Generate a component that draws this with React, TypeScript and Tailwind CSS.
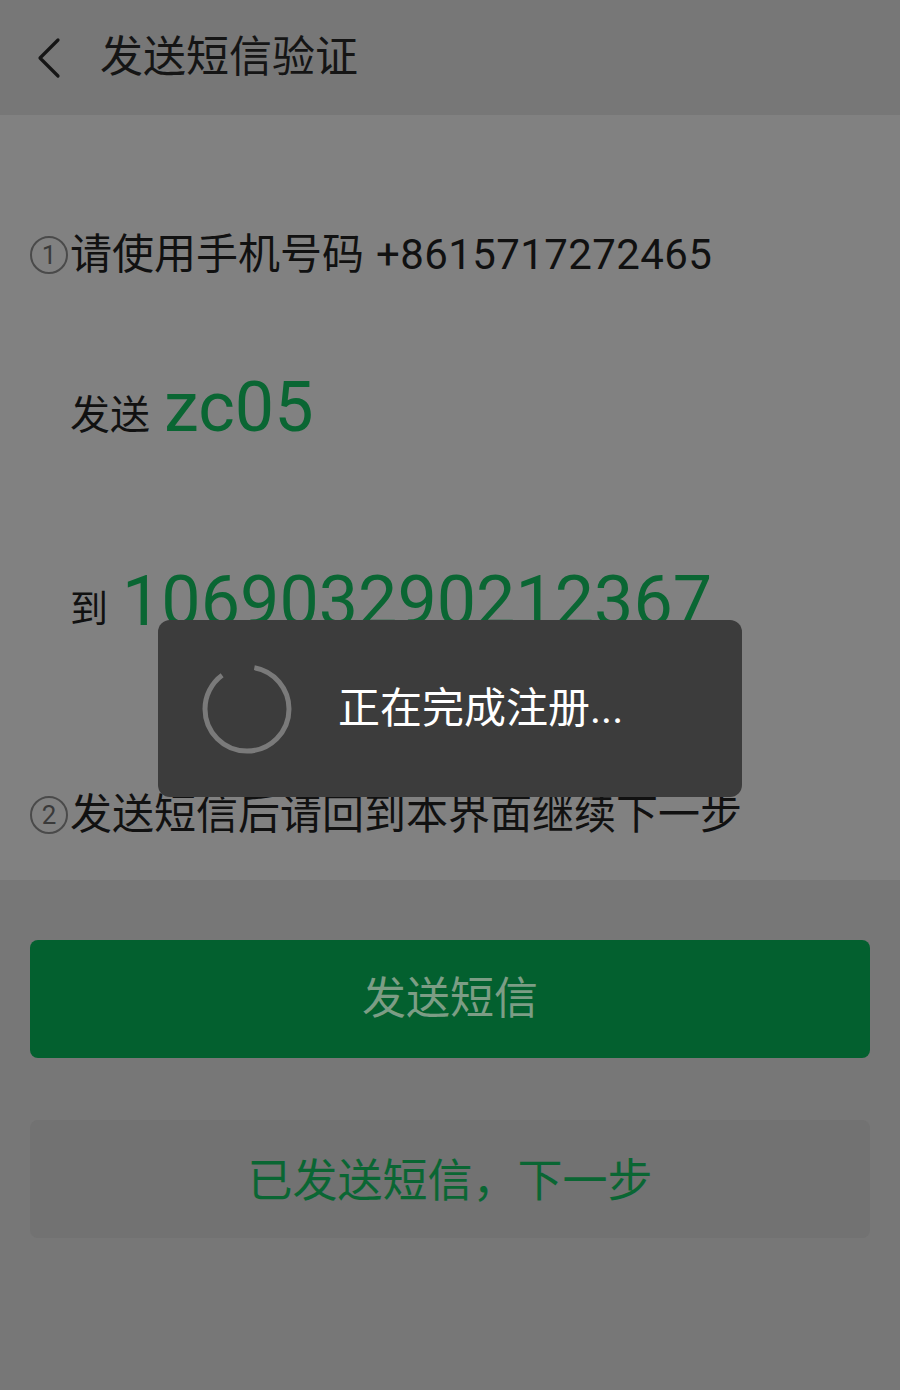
import React from "react";

export default function App() {
  const font = { fontFamily: "Roboto, 'Noto Sans CJK SC', sans-serif" };
  return (
    <div className="relative w-[900px] h-[1390px] bg-[#777777] overflow-hidden text-[#111111]" style={font}>
      {/* header */}
      <div className="h-[115px] flex items-center bg-[#777777]">
        <svg className="ml-[34px] w-[30px] h-[44px]" viewBox="0 0 30 44" fill="none">
          <path d="M24 4 L6 22 L24 40" stroke="#151515" strokeWidth="3.2" strokeLinecap="round" strokeLinejoin="round" />
        </svg>
        <div className="ml-[36px] text-[43px] leading-none text-[#151515]">发送短信验证</div>
      </div>

      {/* content */}
      <div className="h-[765px] bg-[#818181] flex flex-col pl-[30px]">
        <div className="mt-[117px] flex items-center h-[46px] text-[39px] leading-none">
          <span className="w-[38px] h-[38px] rounded-full border-[2px] border-[#4a4a4a] text-[#3a3a3a] text-[26px] flex items-center justify-center mr-[2px]">1</span>
          <span className="text-[42px]">请使用手机号码</span>
          <span className="ml-[12px] text-[42px] tracking-[0.4px]">+8615717272465</span>
        </div>

        <div className="mt-[82px] ml-[40px] flex items-end h-[80px]">
          <span className="text-[40px] leading-none mb-[4px]">发送</span>
          <span className="ml-[14px] text-[70px] leading-none text-[#0a6633] mb-[-2px]">zc05</span>
        </div>

        <div className="mt-[112px] ml-[40px] flex items-end h-[80px]">
          <span className="text-[38px] leading-none mb-[4px]">到</span>
          <span className="ml-[14px] text-[70px] leading-none text-[#0a6633] mb-[-4px]">106903290212367</span>
        </div>

        <div className="mt-[160px] flex items-center h-[46px] leading-none">
          <span className="w-[38px] h-[38px] rounded-full border-[2px] border-[#4a4a4a] text-[#3a3a3a] text-[26px] flex items-center justify-center mr-[2px]">2</span>
          <span className="text-[42px]">发送短信后请回到本界面继续下一步</span>
        </div>
      </div>

      {/* buttons */}
      <div className="px-[30px] flex flex-col">
        <div className="mt-[60px] h-[118px] rounded-[8px] bg-[#03602f] flex items-center justify-center text-[44px] text-[#7c9d85]">
          发送短信
        </div>
        <div className="mt-[62px] h-[118px] rounded-[8px] bg-[#727272] flex items-center justify-center text-[45px] text-[#0a6633] pt-[6px]">
          已发送短信，下一步
        </div>
      </div>

      {/* loading dialog */}
      <div className="absolute left-[158px] top-[620px] w-[584px] h-[177px] rounded-[12px] bg-[#3c3c3c] flex items-center">
        <svg className="ml-[43px] w-[92px] h-[92px]" viewBox="0 0 92 92">
          <circle cx="46" cy="46" r="42" fill="none" stroke="#7a7a7a" strokeWidth="5"
            strokeDasharray="230 34" strokeDashoffset="-205" />
        </svg>
        <div className="ml-[45px] text-[42px] text-white leading-none">正在完成注册...</div>
      </div>
    </div>
  );
}
